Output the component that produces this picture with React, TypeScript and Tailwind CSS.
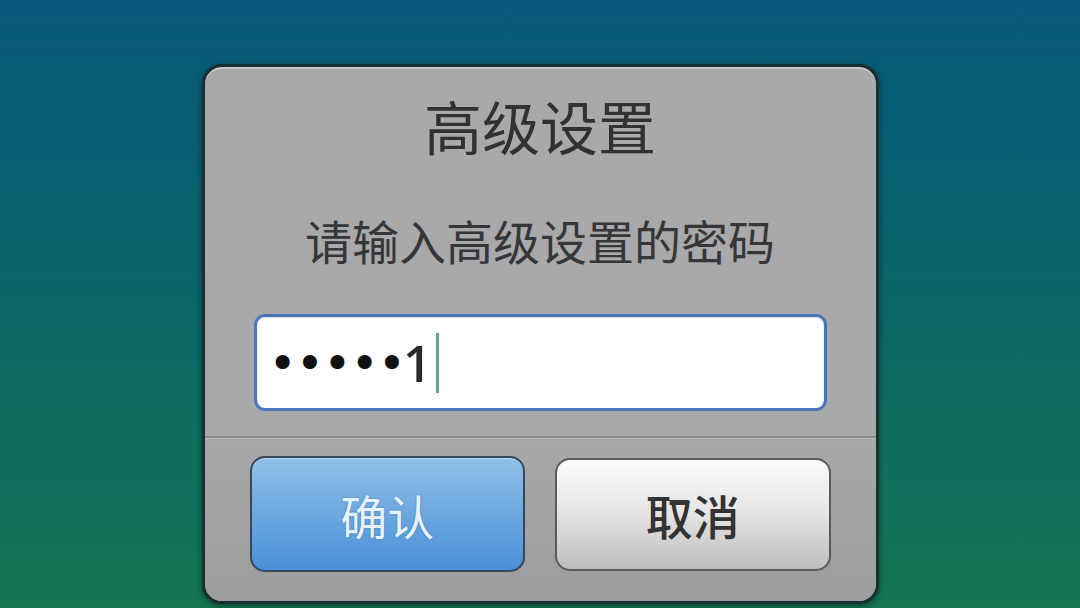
import React from "react";

export default function App() {
  const cjk = { fontFamily: '"Noto Sans CJK SC", "Noto Sans", sans-serif' };
  return (
    <div className="h-[608px] w-full overflow-hidden bg-linear-to-b from-[#09597c] via-[#0b6566] to-[#157652] pt-[64px]">
      <div
        className="mx-auto flex w-[677px] flex-col overflow-hidden rounded-[20px] border-[3px] border-[#1b2e31] bg-[#a9a8aa] shadow-[0_2px_6px_rgba(0,0,0,0.45),inset_0_2px_0_#c9c8ca]"
        style={cjk}
      >
        <div className="flex h-[120px] items-center justify-center pb-[4px] text-[58px] leading-none text-[#313133]">
          高级设置
        </div>
        <div className="flex h-[108px] items-center justify-center pb-[4px] text-[47px] leading-none text-[#363638]">
          请输入高级设置的密码
        </div>
        <div className="mt-[19px] px-[49px]">
          <div className="flex h-[97px] items-center rounded-[11px] border-[3px] border-[#4a76bd] bg-white pl-[12px] shadow-[inset_0_1px_2px_rgba(0,0,0,0.15)]">
            <span
              className="text-[48px] leading-none text-[#111]"
              style={{ fontFamily: '"DejaVu Sans", sans-serif', letterSpacing: "-1px" }}
            >
              •••••
            </span>
            <span
              className="ml-[-2px] text-[50px] font-semibold leading-none text-[#2a2a2a]"
              style={{ fontFamily: '"Open Sans", sans-serif' }}
            >
              1
            </span>
            <span className="ml-[4px] h-[60px] w-[3px] bg-[#6aa58f]" />
          </div>
        </div>
        <div className="mt-[25px] h-[2px] bg-[#8a898b]" />
        <div className="h-[1px] bg-[#bdbcbe]" />
        <div className="flex gap-[30px] bg-linear-to-b from-[#a8a7a9] to-[#9d9c9e] px-[45px] pb-[29px] pt-[17px]">
          <div className="flex h-[116px] flex-1 items-center justify-center rounded-[15px] border-[2px] border-[#34485a] bg-linear-to-b from-[#8fc0e8] to-[#4990d8] text-[47px] leading-none text-[#e6f3fb] shadow-[inset_0_1px_0_#b8d8f2] [text-shadow:0_0_2px_rgba(40,80,120,0.6)]">
            确认
          </div>
          <div className="mt-[2px] flex h-[113px] flex-1 items-center justify-center rounded-[15px] border-[2px] border-[#5a5a5c] bg-linear-to-b from-[#fbfbfb] via-[#e4e4e4] to-[#bdbdbd] text-[47px] font-medium leading-none text-[#333]">
            取消
          </div>
        </div>
      </div>
    </div>
  );
}
